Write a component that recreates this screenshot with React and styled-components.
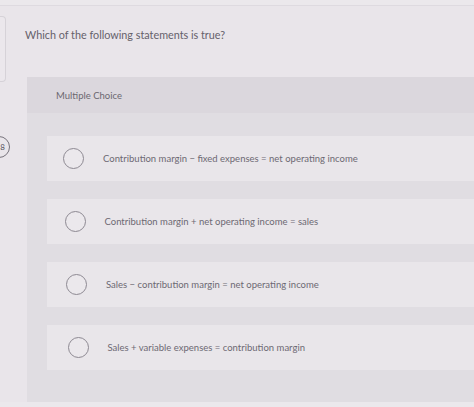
import React from "react";
import styled, { createGlobalStyle } from "styled-components";

const GlobalStyle = createGlobalStyle`
	html, body {
		margin: 0;
		padding: 0;
		background: #ebe8ec;
		overflow: hidden;
	}
	body {
		font-family: Lato, "Liberation Sans", sans-serif;
	}
`;

const Page = styled.div`
	width: 474px;
	height: 397px;
	display: flex;
	border-top: 1px solid #dedae0;
	margin-top: 5px;
	box-sizing: border-box;
	background: #e9e5ea;
`;

const Side = styled.div`
	width: 27px;
	flex-shrink: 0;
	display: flex;
	flex-direction: column;
	padding-top: 10px;
`;

const SideCard = styled.div`
	width: 5px;
	height: 64px;
	border: 1px solid #d6d2d8;
	border-left: none;
	border-radius: 0 4px 4px 0;
	background: #ebe7ec;
`;

const Badge = styled.div`
	margin-top: 54px;
	margin-left: -12px;
	width: 22px;
	height: 22px;
	border: 1px solid #77737c;
	border-radius: 50%;
	display: flex;
	align-items: center;
	justify-content: flex-end;
	padding-right: 4px;
	box-sizing: border-box;
	font-size: 8px;
	color: #55515a;
`;

const Main = styled.div`
	flex: 1;
	display: flex;
	flex-direction: column;
	margin-left: -2px;
`;

const Question = styled.div`
	padding: 22px 0 0 0;
	height: 71px;
	flex-shrink: 0;
	box-sizing: border-box;
	font-size: 10.8px;
	color: #65616a;
`;

const Panel = styled.div`
	margin-left: 2px;
	background: #e0dde2;
	flex: 1;
	display: flex;
	flex-direction: column;
`;

const PanelHeader = styled.div`
	height: 36px;
	display: flex;
	align-items: center;
	padding-left: 29px;
	background: #dbd7dd;
	font-size: 9.5px;
	color: #6b6770;
`;

const Options = styled.div`
	display: flex;
	flex-direction: column;
	gap: 18px;
	padding: 23px 0 0 20px;
`;

const Option = styled.div`
	height: 45px;
	display: flex;
	align-items: center;
	padding-left: ${(p) => p.$indent}px;
	background: #e9e6ea;
	font-size: 9.5px;
	color: #6d6973;
`;

const Radio = styled.span`
	width: 19px;
	height: 19px;
	border: 1px solid #8d8992;
	border-radius: 50%;
	flex-shrink: 0;
	margin-right: 19px;
	background: #ebe8ec;
`;

const choices = [
	"Contribution margin − fixed expenses = net operating income",
	"Contribution margin + net operating income = sales",
	"Sales − contribution margin = net operating income",
	"Sales + variable expenses = contribution margin",
];

function App() {
	return (
		<>
			<GlobalStyle />
			<Page>
				<Side>
					<SideCard />
					<Badge>8</Badge>
				</Side>
				<Main>
					<Question>Which of the following statements is true?</Question>
					<Panel>
						<PanelHeader>Multiple Choice</PanelHeader>
						<Options>
							{choices.map((c, i) => (
								<Option key={c} $indent={16 + i * 1.5}>
									<Radio />
									{c}
								</Option>
							))}
						</Options>
					</Panel>
				</Main>
			</Page>
		</>
	);
}

export default App;
